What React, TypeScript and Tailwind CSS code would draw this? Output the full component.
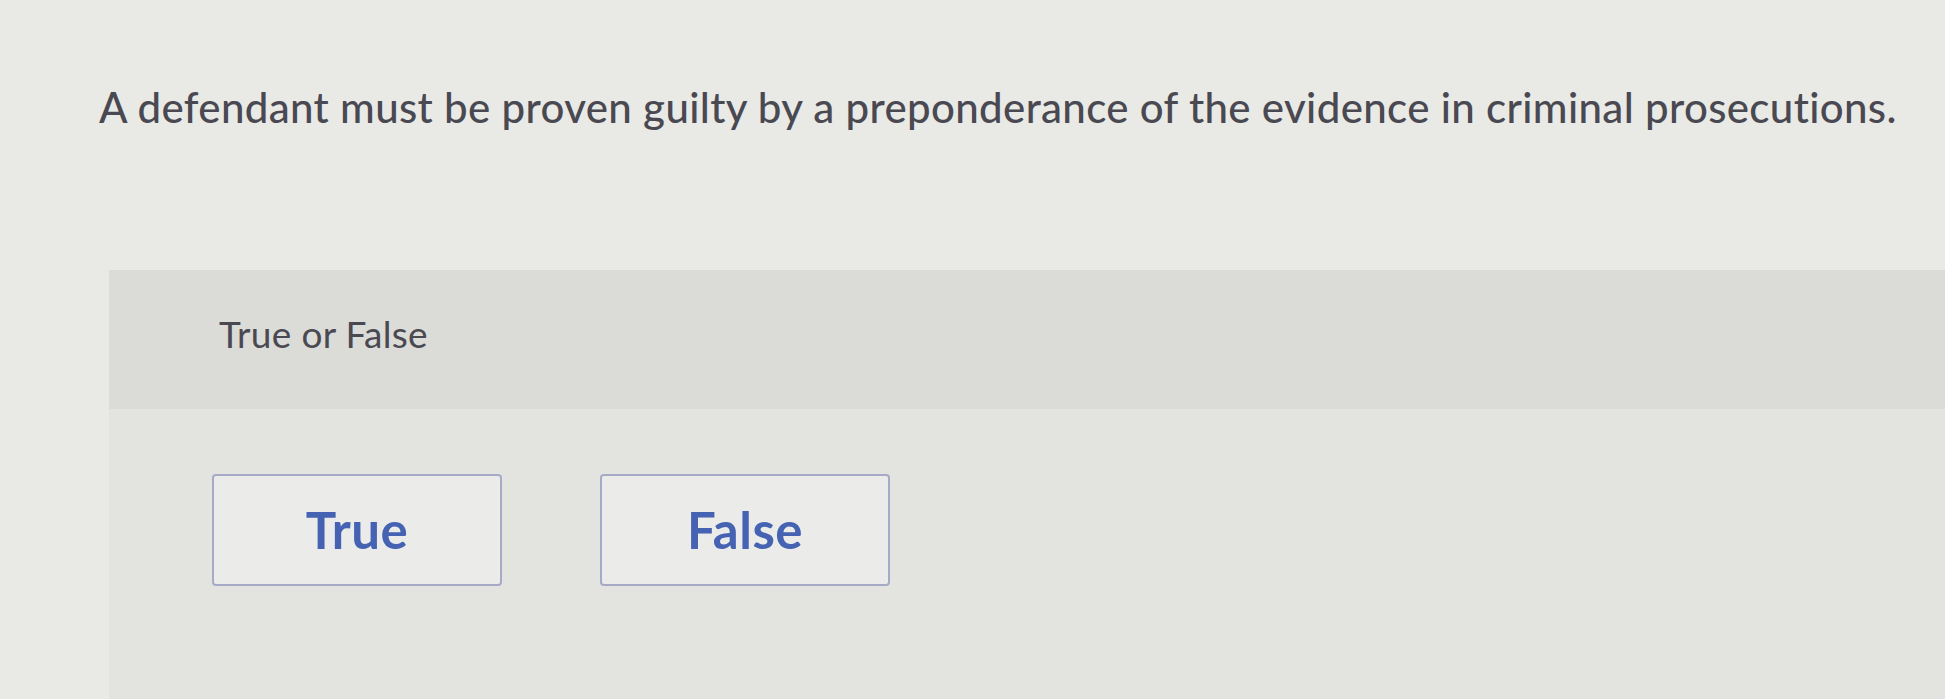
import React from "react";

const choices = ["True", "False"];

const App = () => {
  return (
    <div
      className="w-full h-[699px] overflow-hidden bg-[#e9e9e6] text-[#4a4952]"
      style={{ fontFamily: "Lato, 'Open Sans', sans-serif" }}
    >
      <p className="pt-[82px] pl-[99px] text-[42px] leading-[50px] font-medium tracking-[0.35px]">
        A defendant must be proven guilty by a preponderance of the evidence in criminal prosecutions.
      </p>

      <div className="mt-[138px] ml-[109px] h-[429px] bg-[#e3e3e0]">
        <div className="h-[139px] bg-[#dbdbd8] pt-[44px] pl-[110px]">
          <span className="text-[37px] leading-[40px] tracking-[0.3px]">True or False</span>
        </div>

        <div className="flex gap-[98px] pt-[65px] pl-[103px]">
          {choices.map((c) => (
            <button
              key={c}
              type="button"
              className="w-[290px] h-[112px] rounded-[4px] border-2 border-[#a6aac6] bg-[#ebebe9] text-[51px] font-bold tracking-[0.5px] text-[#4563b2]"
            >
              {c}
            </button>
          ))}
        </div>
      </div>
    </div>
  );
};

export default App;
